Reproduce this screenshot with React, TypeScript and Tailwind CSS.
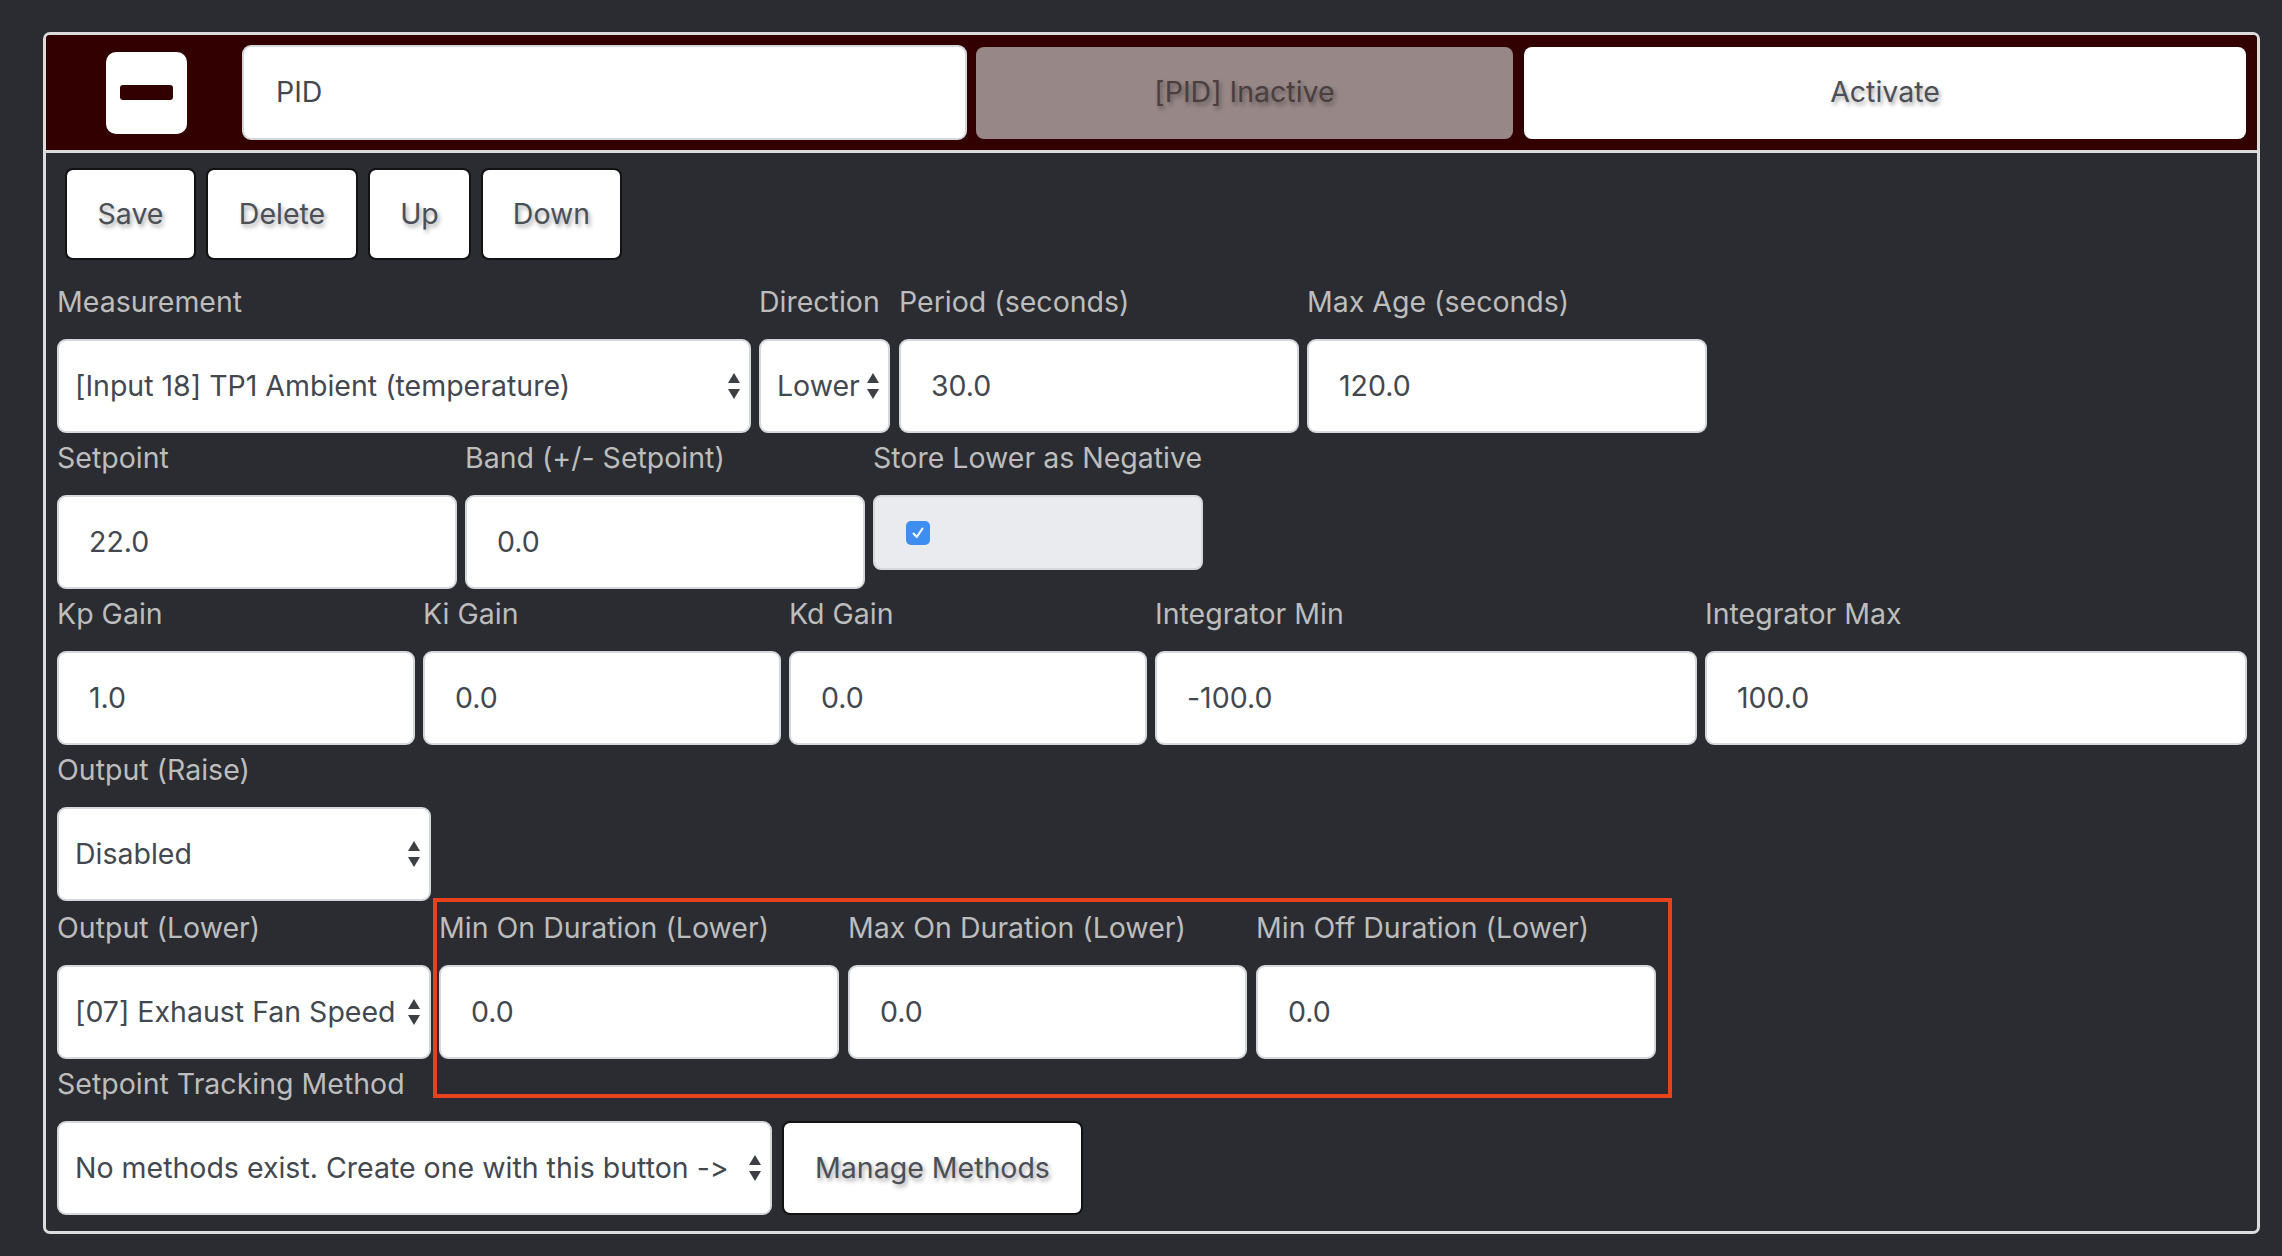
import type { ReactNode } from 'react'

// macOS style up/down arrows for select boxes
function Arrows() {
  return (
    <svg width="12" height="26" viewBox="0 0 12 26" className="shrink-0">
      <path d="M6 0 L12 10 L0 10 Z" fill="#3c3f44" />
      <path d="M6 26 L12 16 L0 16 Z" fill="#3c3f44" />
    </svg>
  )
}

function Label({ children }: { children: ReactNode }) {
  return (
    <div className="h-[42px] leading-[50px] mb-[20px] text-[28.5px] text-[#bdbdbd] whitespace-nowrap">
      {children}
    </div>
  )
}

function TextField({ label, value, className }: { label: string; value: string; className: string }) {
  return (
    <div className={className}>
      <Label>{label}</Label>
      <div className="h-[94px] bg-white border-2 border-[#d4d7dc] rounded-[9px] flex items-center pl-[30px] text-[28.5px] text-[#43484f]">
        {value}
      </div>
    </div>
  )
}

function SelectField({ label, value, className }: { label: string; value: string; className: string }) {
  return (
    <div className={className}>
      <Label>{label}</Label>
      <div className="h-[94px] bg-white border-2 border-[#d4d7dc] rounded-[9px] flex items-center justify-between pl-[16px] pr-[9px] text-[28.5px] text-[#43484f] whitespace-nowrap">
        <span>{value}</span>
        <Arrows />
      </div>
    </div>
  )
}

function ActionButton({ children, className }: { children: ReactNode; className: string }) {
  return (
    <div
      className={`h-[92px] bg-white border-2 border-[#121212] rounded-[8px] flex items-center justify-center text-[28.5px] text-[#4b4f56] [text-shadow:2px_3px_4px_rgba(0,0,0,0.35)] ${className}`}
    >
      {children}
    </div>
  )
}

export default function App() {
  return (
    <div className="min-h-screen bg-[#2a2c31] pt-[32px] pl-[43px] font-[Inter,'Noto_Sans',sans-serif] [font-feature-settings:'calt'_0,'liga'_0]">
      <div className="w-[2217px] border-[3px] border-[#dcdcdc] rounded-[7px] overflow-hidden">
        {/* header */}
        <div className="h-[118px] bg-[#330000] border-b-[3px] border-[#dcdcdc] flex items-center">
          <div className="ml-[60px] w-[81px] h-[82px] bg-white rounded-[10px] flex items-center justify-center">
            <div className="w-[53px] h-[15px] rounded-[3px] bg-[#330000]" />
          </div>
          <div className="ml-[55px] w-[725px] h-[95px] bg-white border-2 border-[#d4d7dc] rounded-[9px] flex items-center pl-[32px] text-[28.5px] text-[#43484f]">
            PID
          </div>
          <div className="ml-[9px] w-[537px] h-[92px] bg-[#978787] rounded-[8px] flex items-center justify-center text-[28.5px] text-[#4a3e3e] [text-shadow:2px_3px_4px_rgba(0,0,0,0.35)]">
            [PID] Inactive
          </div>
          <div className="ml-[11px] mr-[11px] flex-1 h-[92px] bg-white rounded-[8px] flex items-center justify-center text-[28.5px] text-[#4b4f56] [text-shadow:2px_3px_4px_rgba(0,0,0,0.35)]">
            Activate
          </div>
        </div>

        {/* body */}
        <div className="pt-[15px] pb-[16px] pl-[11px]">
          <div className="flex gap-[10px] ml-[8px]">
            <ActionButton className="w-[131px]">Save</ActionButton>
            <ActionButton className="w-[152px]">Delete</ActionButton>
            <ActionButton className="w-[103px]">Up</ActionButton>
            <ActionButton className="w-[141px]">Down</ActionButton>
          </div>

          <div className="mt-[17px] flex flex-col">
            <div className="flex">
              <SelectField label="Measurement" value="[Input 18] TP1 Ambient (temperature)" className="w-[694px]" />
              <SelectField label="Direction" value="Lower" className="ml-[8px] w-[131px]" />
              <TextField label="Period (seconds)" value="30.0" className="ml-[9px] w-[400px]" />
              <TextField label="Max Age (seconds)" value="120.0" className="ml-[8px] w-[400px]" />
            </div>

            <div className="flex">
              <TextField label="Setpoint" value="22.0" className="w-[400px]" />
              <TextField label="Band (+/- Setpoint)" value="0.0" className="ml-[8px] w-[400px]" />
              <div className="ml-[8px] w-[330px] h-[156px]">
                <Label>Store Lower as Negative</Label>
                <div className="h-[75px] bg-[#e9ebef] border-2 border-[#d4d7dc] rounded-[8px] flex items-center pl-[31px]">
                  <div className="w-[24px] h-[24px] rounded-[5px] bg-[#3d8ef0] flex items-center justify-center">
                    <svg width="16" height="16" viewBox="0 0 16 16">
                      <path d="M3.5 8.5 L6.8 12 L12.5 3.5" fill="none" stroke="#ffffff" strokeWidth="2" strokeLinecap="round" strokeLinejoin="round" />
                    </svg>
                  </div>
                </div>
              </div>
            </div>

            <div className="flex gap-[8px]">
              <TextField label="Kp Gain" value="1.0" className="w-[358px]" />
              <TextField label="Ki Gain" value="0.0" className="w-[358px]" />
              <TextField label="Kd Gain" value="0.0" className="w-[358px]" />
              <TextField label="Integrator Min" value="-100.0" className="w-[542px]" />
              <TextField label="Integrator Max" value="100.0" className="w-[542px]" />
            </div>

            <div className="flex">
              <SelectField label="Output (Raise)" value="Disabled" className="w-[374px]" />
            </div>

            <div className="flex mt-[2px]">
              <SelectField label="Output (Lower)" value="[07] Exhaust Fan Speed" className="w-[374px]" />
              <div className="relative ml-[8px] flex gap-[9px]">
                <TextField label="Min On Duration (Lower)" value="0.0" className="w-[400px]" />
                <TextField label="Max On Duration (Lower)" value="0.0" className="w-[399px]" />
                <TextField label="Min Off Duration (Lower)" value="0.0" className="w-[400px]" />
                <div className="absolute -top-[5px] -left-[6px] -right-[16px] -bottom-[39px] border-4 border-[#e8411e] pointer-events-none" />
              </div>
            </div>

            <div className="flex items-end">
              <SelectField label="Setpoint Tracking Method" value="No methods exist. Create one with this button ->" className="w-[715px]" />
              <ActionButton className="ml-[10px] w-[301px] h-[94px]">Manage Methods</ActionButton>
            </div>
          </div>
        </div>
      </div>
    </div>
  )
}
